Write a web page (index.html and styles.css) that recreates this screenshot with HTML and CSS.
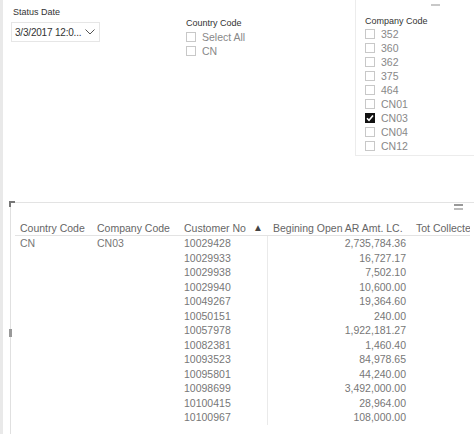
FILE: index.html
```html
<!DOCTYPE html>
<html>
<head>
<meta charset="utf-8">
<link rel="stylesheet" href="styles.css">
</head>
<body>
<div class="canvas">
  <div class="top">
    <div class="slicer date-slicer">
      <div class="slicer-title">Status Date</div>
      <div class="dropdown">
        <span class="dd-text">3/3/2017 12:0...</span>
        <svg class="chev" width="10" height="6" viewBox="0 0 10 6"><path d="M0.5 0.5 L5 5 L9.5 0.5" fill="none" stroke="#555" stroke-width="1"/></svg>
      </div>
    </div>
    <div class="slicer country-slicer">
      <div class="slicer-title">Country Code</div>
      <div class="item"><span class="box"></span>Select All</div>
      <div class="item"><span class="box"></span>CN</div>
    </div>
    <div class="slicer company-slicer">
      <div class="grip"></div>
      <div class="slicer-title">Company Code</div>
      <div class="item"><span class="box"></span>352</div>
      <div class="item"><span class="box"></span>360</div>
      <div class="item"><span class="box"></span>362</div>
      <div class="item"><span class="box"></span>375</div>
      <div class="item"><span class="box"></span>464</div>
      <div class="item"><span class="box"></span>CN01</div>
      <div class="item"><span class="box checked"><svg width="8" height="8" viewBox="0 0 8 8"><path d="M1 4.2 L3 6.2 L7 1.5" fill="none" stroke="#fff" stroke-width="1.6"/></svg></span>CN03</div>
      <div class="item"><span class="box"></span>CN04</div>
      <div class="item"><span class="box"></span>CN12</div>
    </div>
  </div>
  <div class="table-visual">
    <span class="corner"></span>
    <span class="grip2"><i></i><i></i></span>
    <span class="side-handle"></span>
    <table class="grid">
      <colgroup>
        <col class="w1"><col class="w2"><col class="w3"><col class="w4"><col class="w5">
      </colgroup>
      <thead>
        <tr>
          <th>Country Code</th>
          <th>Company Code</th>
          <th class="c3">Customer No <span class="sort">&#9650;</span></th>
          <th class="c4">Begining Open AR Amt. LC.</th>
          <th class="c5">Tot Collecte</th>
        </tr>
      </thead>
      <tbody>
        <tr><td>CN</td><td>CN03</td><td>10029428</td><td class="num">2,735,784.36</td><td></td></tr>
        <tr><td></td><td></td><td>10029933</td><td class="num">16,727.17</td><td></td></tr>
        <tr><td></td><td></td><td>10029938</td><td class="num">7,502.10</td><td></td></tr>
        <tr><td></td><td></td><td>10029940</td><td class="num">10,600.00</td><td></td></tr>
        <tr><td></td><td></td><td>10049267</td><td class="num">19,364.60</td><td></td></tr>
        <tr><td></td><td></td><td>10050151</td><td class="num">240.00</td><td></td></tr>
        <tr><td></td><td></td><td>10057978</td><td class="num">1,922,181.27</td><td></td></tr>
        <tr><td></td><td></td><td>10082381</td><td class="num">1,460.40</td><td></td></tr>
        <tr><td></td><td></td><td>10093523</td><td class="num">84,978.65</td><td></td></tr>
        <tr><td></td><td></td><td>10095801</td><td class="num">44,240.00</td><td></td></tr>
        <tr><td></td><td></td><td>10098699</td><td class="num">3,492,000.00</td><td></td></tr>
        <tr><td></td><td></td><td>10100415</td><td class="num">28,964.00</td><td></td></tr>
        <tr><td></td><td></td><td>10100967</td><td class="num">108,000.00</td><td></td></tr>
      </tbody>
    </table>
  </div>
</div>
</body>
</html>
```
FILE: styles.css
```css
html, body {
  margin: 0;
  padding: 0;
  background: #fff;
}
body {
  width: 474px;
  height: 434px;
  overflow: hidden;
  font-family: "Liberation Sans", Arial, sans-serif;
}
.canvas {
  border-left: 3px solid #e9e9e9;
  height: 434px;
  box-sizing: border-box;
}
.top {
  display: flex;
  height: 202px;
}
.slicer-title {
  font-size: 9px;
  color: #333;
  line-height: 12px;
}
.date-slicer {
  width: 183px;
  flex: none;
  padding-left: 8px;
  padding-top: 6px;
  box-sizing: border-box;
}
.date-slicer .slicer-title {
  padding-left: 2px;
}
.dropdown {
  margin-top: 4px;
  width: 89px;
  height: 20px;
  box-sizing: border-box;
  border: 1px solid #e6e6e6;
  display: flex;
  align-items: center;
  justify-content: space-between;
  padding: 0 3px 0 3px;
  font-size: 10px;
  color: #333;
  white-space: nowrap;
}
.dd-text {
  letter-spacing: -0.2px;
}
.chev {
  margin-right: 1px;
  flex: none;
}
.country-slicer {
  width: 169px;
  flex: none;
  padding-top: 17px;
  box-sizing: border-box;
}
.country-slicer .slicer-title {
  margin-bottom: 1px;
}
.item {
  display: flex;
  align-items: center;
  font-size: 10.5px;
  color: #888;
  height: 14px;
  line-height: 14px;
}
.box {
  width: 8px;
  height: 8px;
  border: 1px solid #c8c8c8;
  margin-right: 6px;
  flex: none;
  display: flex;
  align-items: center;
  justify-content: center;
}
.box.checked {
  background: #111;
  border-color: #111;
}
.company-slicer {
  position: relative;
  flex: 1;
  height: 156px;
  box-sizing: border-box;
  border-left: 1px solid #ececec;
  border-bottom: 1px solid #ececec;
  padding-left: 9px;
  padding-top: 15px;
}
.grip {
  position: absolute;
  left: 75px;
  top: 4px;
  width: 9px;
  height: 2px;
  background: #c8c8c8;
}
.table-visual {
  position: relative;
  margin-left: 7px;
  border-top: 1px solid #e3e3e3;
  border-left: 1px solid #e0e0e0;
  height: 232px;
  box-sizing: border-box;
  padding-left: 4px;
  padding-top: 17px;
}
.corner {
  position: absolute;
  left: -2px;
  top: -2px;
  width: 4px;
  height: 4px;
  border-top: 2px solid #777;
  border-left: 2px solid #777;
}
.grip2 {
  position: absolute;
  right: 11px;
  top: 1px;
  width: 9px;
  display: flex;
  flex-direction: column;
  gap: 2px;
}
.grip2 i {
  display: block;
  height: 2px;
  background: #bbb;
}
.grip2 i:first-child {
  background: #999;
}
.side-handle {
  position: absolute;
  left: -2px;
  top: 126px;
  width: 3px;
  height: 8px;
  background: #999;
}
.grid {
  border-collapse: collapse;
  font-size: 10.5px;
  color: #777;
  white-space: nowrap;
  table-layout: fixed;
  width: 455px;
}
.w1 { width: 77px; }
.w2 { width: 87px; }
.w3 { width: 88px; }
.w4 { width: 143px; }
.w5 { width: 60px; }
.grid th {
  font-weight: normal;
  text-align: left;
  color: #666;
  height: 15px;
  padding: 0 0 0 5px;
  border-bottom: 1px solid #e3e3e3;
  vertical-align: middle;
  overflow: hidden;
}
.grid td {
  padding: 0 0 0 5px;
  height: 14.5px;
  line-height: 14px;
}
.grid th.c3 {
  position: relative;
  overflow: visible;
}
.grid th.c4,
.grid th.c5 {
  padding-left: 6px;
}
.sort {
  position: absolute;
  left: 74px;
  top: 2px;
  font-size: 10px;
  color: #444;
}
.grid td:nth-child(4) {
  border-left: 1px solid #eaeaea;
}
.grid td.num {
  text-align: right;
  padding-right: 4px;
}
```
